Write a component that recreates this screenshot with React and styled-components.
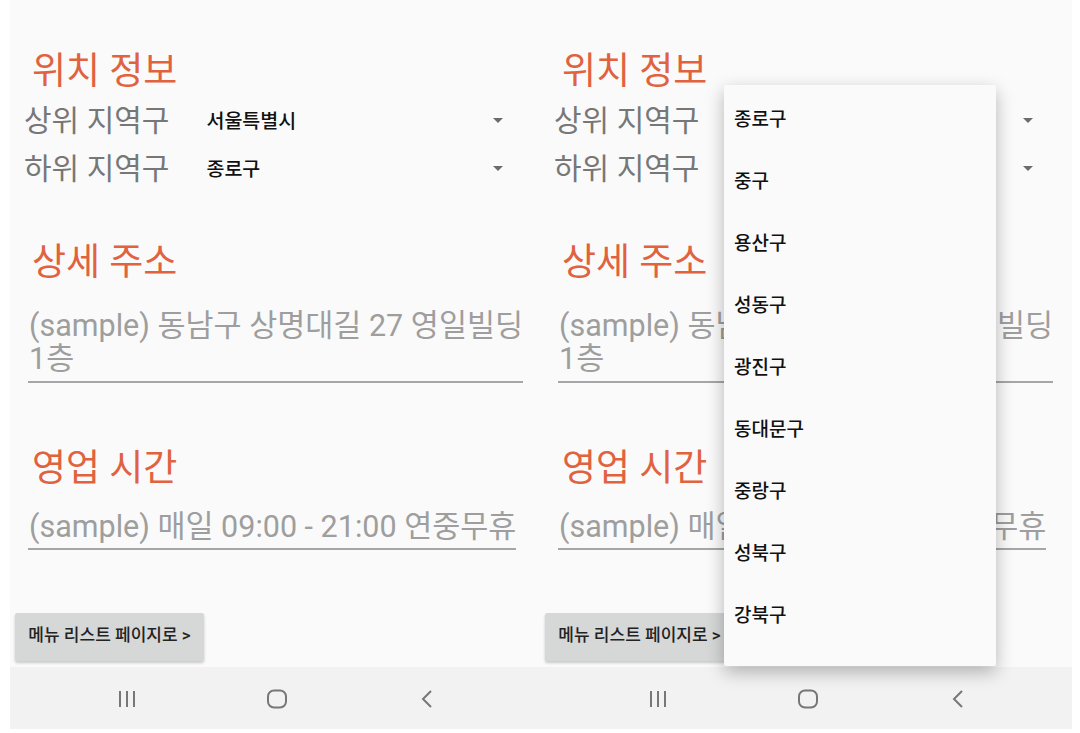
import React from "react";
import styled, { createGlobalStyle } from "styled-components";

const GlobalStyle = createGlobalStyle`
	body {
		margin: 0;
		background: #ffffff;
		font-family: Roboto, "Noto Sans CJK KR", sans-serif;
	}
`;

const Frame = styled.div`
	display: flex;
	padding-left: 10px;
	width: 1080px;
	height: 733px;
	box-sizing: border-box;
`;

const Screen = styled.div`
	position: relative;
	width: ${(props) => props.width}px;
	height: 729px;
	background: #fafafa;
	display: flex;
	flex-direction: column;
`;

const Content = styled.div`
	flex: 1;
	display: flex;
	flex-direction: column;
	align-items: flex-start;
	padding-top: 50px;
`;

const Title = styled.div`
	font-size: 37px;
	line-height: 44px;
	color: #e0623f;
	padding-left: 22px;
	margin-top: ${(props) => props.top || 0}px;
`;

const Row = styled.div`
	display: flex;
	align-items: center;
	height: 48px;
	width: 530px;
	box-sizing: border-box;
	padding-left: 14px;
	padding-right: 37px;
	&:first-of-type {
		margin-top: 2px;
	}
`;

const Label = styled.div`
	font-size: 30px;
	color: #777777;
	white-space: nowrap;
`;

const Spinner = styled.div`
	flex: 1;
	display: flex;
	align-items: center;
	justify-content: space-between;
	margin-left: 37px;
	padding-top: 3px;
	font-size: 19.5px;
	font-weight: 500;
	color: #111111;
`;

const Arrow = styled.div`
	width: 0;
	height: 0;
	border-left: 5px solid transparent;
	border-right: 5px solid transparent;
	border-top: 5px solid #6b6b6b;
	margin-top: 2px;
`;

const Field = styled.div`
	margin-left: 18px;
	margin-top: ${(props) => props.top || 0}px;
	width: ${(props) => (props.wide ? "495px" : "auto")};
	box-sizing: border-box;
	padding-left: 1px;
	font-size: 30.5px;
	line-height: 33px;
	color: #9e9e9e;
	white-space: nowrap;
	padding-bottom: ${(props) => props.pad || 6}px;
	border-bottom: 2px solid #a6a6a6;
`;

const MenuButton = styled.div`
	margin-top: auto;
	margin-bottom: 6px;
	margin-left: 5px;
	width: 189px;
	height: 48px;
	box-sizing: border-box;
	padding-top: 8px;
	text-align: center;
	background: #d6d7d7;
	border-radius: 2px;
	box-shadow: 0 2px 3px rgba(0, 0, 0, 0.2);
	font-size: 17px;
	font-weight: 500;
	color: #222222;
	white-space: nowrap;
`;

const NavBar = styled.div`
	height: 62px;
	background: #f2f2f2;
	display: flex;
	align-items: center;
	justify-content: center;
	gap: 128px;
	padding-left: 4px;
`;

const NavIcon = styled.svg`
	width: 22px;
	height: 22px;
	margin-top: 2px;
`;

const Menu = styled.div`
	position: absolute;
	left: 184px;
	top: 85px;
	width: 272px;
	height: 581px;
	background: #fafafa;
	border-radius: 2px;
	box-shadow: 0 6px 18px rgba(0, 0, 0, 0.28);
	overflow: hidden;
	padding-top: 1px;
	box-sizing: border-box;
	z-index: 2;
`;

const MenuItem = styled.div`
	height: 62px;
	display: flex;
	align-items: center;
	padding-left: 10px;
	font-size: 19px;
	font-weight: 500;
	color: #111111;
`;

const districts = [
	"종로구",
	"중구",
	"용산구",
	"성동구",
	"광진구",
	"동대문구",
	"중랑구",
	"성북구",
	"강북구",
];

const RecentsIcon = () => (
	<NavIcon viewBox="0 0 22 22">
		<g stroke="#777" strokeWidth="2">
			<line x1="4" y1="3" x2="4" y2="19" />
			<line x1="11" y1="3" x2="11" y2="19" />
			<line x1="18" y1="3" x2="18" y2="19" />
		</g>
	</NavIcon>
);

const HomeIcon = () => (
	<NavIcon viewBox="0 0 22 22">
		<rect x="2" y="2.5" width="18" height="17" rx="6" fill="none" stroke="#777" strokeWidth="2" />
	</NavIcon>
);

const BackIcon = () => (
	<NavIcon viewBox="0 0 22 22">
		<polyline points="15,3 7,11 15,19" fill="none" stroke="#777" strokeWidth="2" />
	</NavIcon>
);

const Form = ({ menuOpen, width }) => (
	<Screen width={width}>
		<Content>
			<Title>위치 정보</Title>
			<Row>
				<Label>상위 지역구</Label>
				<Spinner>
					서울특별시
					<Arrow />
				</Spinner>
			</Row>
			<Row>
				<Label>하위 지역구</Label>
				<Spinner>
					종로구
					<Arrow />
				</Spinner>
			</Row>

			<Title top={51}>상세 주소</Title>
			<Field wide top={24}>
				(sample) 동남구 상명대길 27 영일빌딩
				<br />
				1층
			</Field>

			<Title top={64}>영업 시간</Title>
			<Field top={19} pad={5}>
				(sample) 매일 09:00 - 21:00 연중무휴
			</Field>

			<MenuButton>메뉴 리스트 페이지로 &gt;</MenuButton>
		</Content>
		<NavBar>
			<RecentsIcon />
			<HomeIcon />
			<BackIcon />
		</NavBar>
		{menuOpen && (
			<Menu>
				{districts.map((d) => (
					<MenuItem key={d}>{d}</MenuItem>
				))}
			</Menu>
		)}
	</Screen>
);

const App = () => (
	<>
		<GlobalStyle />
		<Frame>
			<Form width={530} />
			<Form width={532} menuOpen />
		</Frame>
	</>
);

export default App;
